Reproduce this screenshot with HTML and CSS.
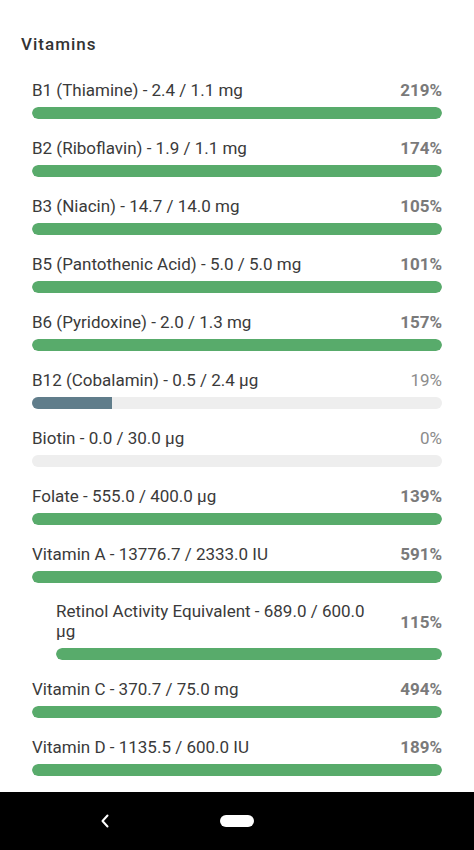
FILE: index.html
```html
<!DOCTYPE html>
<html>
<head>
<meta charset="utf-8">
<link rel="stylesheet" href="styles.css">
</head>
<body>
<div class="screen">
  <main class="content">
    <h2 class="title">Vitamins</h2>
    <div class="list">
      <div class="row">
        <div class="head"><span class="label">B1 (Thiamine) - 2.4 / 1.1 mg</span><span class="pct over">219%</span></div>
        <div class="track"><div class="fill full"></div></div>
      </div>
      <div class="row">
        <div class="head"><span class="label">B2 (Riboflavin) - 1.9 / 1.1 mg</span><span class="pct over">174%</span></div>
        <div class="track"><div class="fill full"></div></div>
      </div>
      <div class="row">
        <div class="head"><span class="label">B3 (Niacin) - 14.7 / 14.0 mg</span><span class="pct over">105%</span></div>
        <div class="track"><div class="fill full"></div></div>
      </div>
      <div class="row">
        <div class="head"><span class="label">B5 (Pantothenic Acid) - 5.0 / 5.0 mg</span><span class="pct over">101%</span></div>
        <div class="track"><div class="fill full"></div></div>
      </div>
      <div class="row">
        <div class="head"><span class="label">B6 (Pyridoxine) - 2.0 / 1.3 mg</span><span class="pct over">157%</span></div>
        <div class="track"><div class="fill full"></div></div>
      </div>
      <div class="row">
        <div class="head"><span class="label">B12 (Cobalamin) - 0.5 / 2.4 µg</span><span class="pct">19%</span></div>
        <div class="track"><div class="fill low" style="width:19.5%"></div></div>
      </div>
      <div class="row">
        <div class="head"><span class="label">Biotin - 0.0 / 30.0 µg</span><span class="pct">0%</span></div>
        <div class="track"></div>
      </div>
      <div class="row">
        <div class="head"><span class="label">Folate - 555.0 / 400.0 µg</span><span class="pct over">139%</span></div>
        <div class="track"><div class="fill full"></div></div>
      </div>
      <div class="row">
        <div class="head"><span class="label">Vitamin A - 13776.7 / 2333.0 IU</span><span class="pct over">591%</span></div>
        <div class="track"><div class="fill full"></div></div>
      </div>
      <div class="row sub">
        <div class="head"><span class="label">Retinol Activity Equivalent - 689.0 / 600.0 µg</span><span class="pct over">115%</span></div>
        <div class="track"><div class="fill full"></div></div>
      </div>
      <div class="row">
        <div class="head"><span class="label">Vitamin C - 370.7 / 75.0 mg</span><span class="pct over">494%</span></div>
        <div class="track"><div class="fill full"></div></div>
      </div>
      <div class="row">
        <div class="head"><span class="label">Vitamin D - 1135.5 / 600.0 IU</span><span class="pct over">189%</span></div>
        <div class="track"><div class="fill full"></div></div>
      </div>
    </div>
  </main>
  <nav class="navbar">
    <svg class="back" width="10" height="14" viewBox="0 0 10 14"><path d="M7.5 1.5 L2.5 7 L7.5 12.5" fill="none" stroke="#fff" stroke-width="2" stroke-linecap="round" stroke-linejoin="round"/></svg>
    <div class="home"></div>
  </nav>
</div>
</body>
</html>
```
FILE: styles.css
```css
html, body {
  margin: 0;
  padding: 0;
  background: #fff;
}
.screen {
  height: 850px;
  display: flex;
  flex-direction: column;
  font-family: Roboto, "Noto Sans", sans-serif;
}
.content {
  flex: 1;
  overflow: hidden;
  padding: 34px 32px 0 32px;
}
.title {
  margin: 0 0 26px -11px;
  font-size: 17px;
  line-height: 20px;
  font-weight: 500;
  letter-spacing: 1px;
  color: #333;
}
.list {
  display: flex;
  flex-direction: column;
  gap: 19px;
}
.row {
  display: flex;
  flex-direction: column;
  gap: 7px;
}
.row.sub {
  padding-left: 24px;
}
.row.sub .label {
  line-height: 19.5px;
}
.head {
  display: flex;
  align-items: center;
  justify-content: space-between;
  gap: 24px;
}
.label {
  font-size: 17px;
  line-height: 20px;
  color: #3a3a3a;
}
.pct {
  font-size: 17px;
  line-height: 20px;
  color: #8c8c8c;
  white-space: nowrap;
}
.pct.over {
  font-weight: 700;
  color: #7a7a7a;
}
.track {
  height: 12px;
  border-radius: 6px;
  background: #eeeeee;
  overflow: hidden;
}
.fill {
  height: 100%;
}
.fill.full {
  width: 100%;
  background: #58ab6b;
  border-radius: 6px;
}
.fill.low {
  background: #607d8b;
}
.navbar {
  height: 58px;
  flex-shrink: 0;
  background: #000;
  display: flex;
  align-items: center;
  position: relative;
}
.back {
  margin-left: 100px;
}
.home {
  position: absolute;
  left: 220px;
  top: 23px;
  width: 34px;
  height: 12px;
  border-radius: 6px;
  background: #fff;
}
```
